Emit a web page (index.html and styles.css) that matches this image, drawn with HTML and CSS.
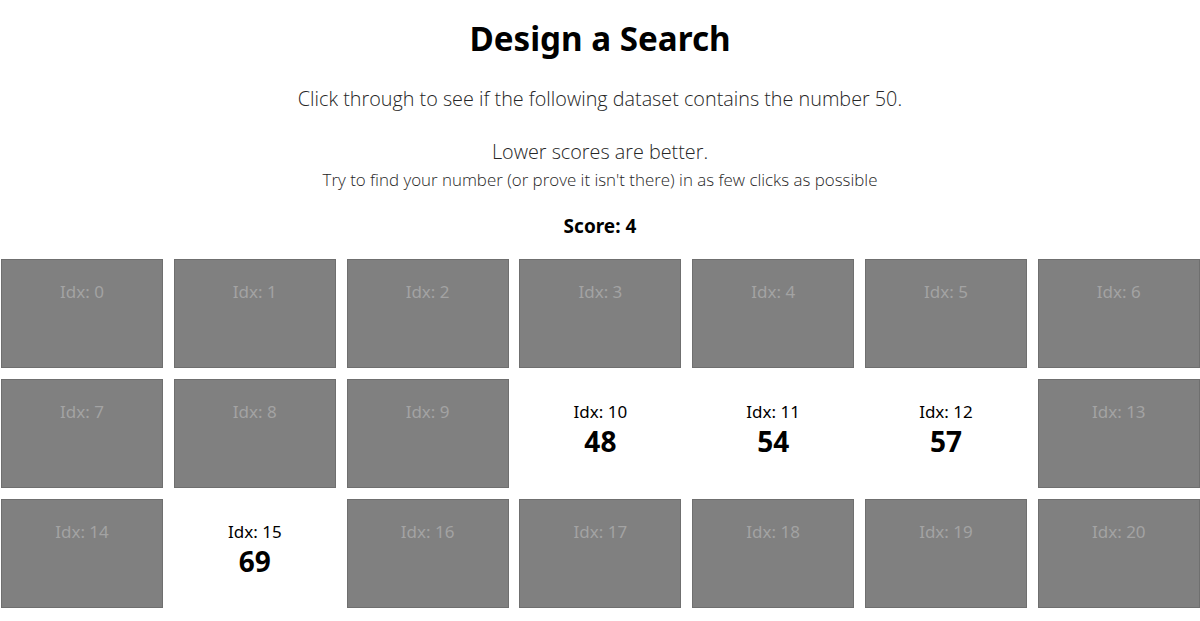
FILE: index.html
```html
<!DOCTYPE html>
<html lang="en">
<head>
    <meta charset="UTF-8">
    <meta name="viewport" content="width=device-width, initial-scale=1.0">
    <title>Design a Search</title>
    <link rel="stylesheet" href="styles.css">
</head>
<body>
    <div class="header">
        <h1>Design a Search</h1>
        <p class="intro">Click through to see if the following dataset contains the number 50.</p>
        <p class="rule">Lower scores are better.</p>
        <p class="hint">Try to find your number (or prove it isn't there) in as few clicks as possible</p>
        <div class="score">Score: 4</div>
    </div>

    <!-- Mřížka s daty -->
    <div id="grid">
        <div class="cell"><div class="idx">Idx: 0</div></div>
        <div class="cell"><div class="idx">Idx: 1</div></div>
        <div class="cell"><div class="idx">Idx: 2</div></div>
        <div class="cell"><div class="idx">Idx: 3</div></div>
        <div class="cell"><div class="idx">Idx: 4</div></div>
        <div class="cell"><div class="idx">Idx: 5</div></div>
        <div class="cell"><div class="idx">Idx: 6</div></div>

        <div class="cell"><div class="idx">Idx: 7</div></div>
        <div class="cell"><div class="idx">Idx: 8</div></div>
        <div class="cell"><div class="idx">Idx: 9</div></div>
        <div class="cell open"><div class="idx">Idx: 10</div><div class="val">48</div></div>
        <div class="cell open"><div class="idx">Idx: 11</div><div class="val">54</div></div>
        <div class="cell open"><div class="idx">Idx: 12</div><div class="val">57</div></div>
        <div class="cell"><div class="idx">Idx: 13</div></div>

        <div class="cell"><div class="idx">Idx: 14</div></div>
        <div class="cell open"><div class="idx">Idx: 15</div><div class="val">69</div></div>
        <div class="cell"><div class="idx">Idx: 16</div></div>
        <div class="cell"><div class="idx">Idx: 17</div></div>
        <div class="cell"><div class="idx">Idx: 18</div></div>
        <div class="cell"><div class="idx">Idx: 19</div></div>
        <div class="cell"><div class="idx">Idx: 20</div></div>
    </div>
</body>
</html>
```

FILE: styles.css
```css
body, html {
    margin: 0;
    padding: 0;
    width: 100%;
    background-color: #fff;
    font-family: 'Noto Sans', sans-serif;
    color: #161616;
    overflow: hidden;
}
.header {
    text-align: center;
    padding-top: 17px;
}
h1 {
    margin: 0;
    font-size: 33.2px;
    font-weight: 700;
    line-height: 44px;
    color: #000;
}
.intro, .rule, .hint {
    font-family: 'Open Sans', 'Noto Sans', sans-serif;
    font-weight: 300;
    color: #262626;
}
.intro {
    margin: 24px 0 0 0;
    font-size: 19.8px;
    line-height: 28px;
}
.rule {
    margin: 25px 0 0 0;
    font-size: 19.8px;
    line-height: 28px;
}
.hint {
    margin: 2px 0 0 0;
    font-size: 16.9px;
    line-height: 24px;
}
.score {
    margin-top: 22px;
    font-size: 19px;
    font-weight: 700;
    line-height: 24px;
    color: #000;
}

#grid {
    display: grid;
    grid-template-columns: repeat(7, 162px);
    column-gap: 10.8px;
    row-gap: 11px;
    width: 1200px;
    margin-top: 21px;
    padding-left: 1px;
}
.cell {
    height: 109px;
    box-sizing: border-box;
    background-color: #808080;
    border: 1px solid #6f6f6f;
    text-align: center;
    padding-top: 21px;
}
.idx {
    font-size: 17px;
    line-height: 22px;
    color: #a3a3a3;
}
.cell.open {
    background-color: #fff;
    border-color: #fff;
}
.cell.open .idx {
    color: #000;
}
.val {
    margin-top: 1px;
    font-size: 28px;
    font-weight: 700;
    line-height: 34px;
    color: #000;
}
```
